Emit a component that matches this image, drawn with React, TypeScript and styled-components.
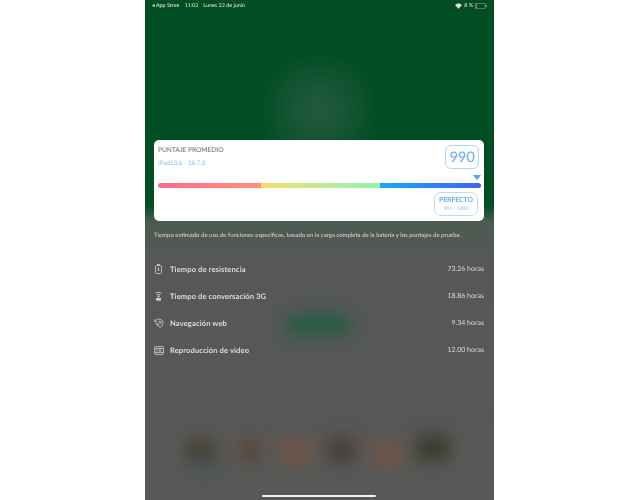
import React from "react";
import styled, { createGlobalStyle } from "styled-components";

const Global = createGlobalStyle`
  html, body { margin: 0; padding: 0; background: #fff; width: 640px; height: 500px; overflow: hidden; }
  body { font-family: "Lato", "Noto Sans", sans-serif; text-rendering: geometricPrecision; }
`;

const Page = styled.div`
  width: 640px;
  height: 500px;
  box-sizing: border-box;
  display: flex;
  padding-left: 145px;
`;

const Screen = styled.div`
  position: relative;
  width: 349px;
  height: 500px;
  overflow: hidden;
  background: #565859;
  display: flex;
  flex-direction: column;
`;

const Backdrop = styled.div`
  position: absolute;
  inset: 0;
  background:
    radial-gradient(ellipse 62px 60px at 174px 110px, #235a3e 0%, rgba(35, 90, 62, 0.7) 40%, rgba(35, 90, 62, 0) 100%),
    linear-gradient(180deg, #014d24 0px, #014d24 205px, #4a5c50 222px, #555758 248px, #565859 100%);
`;

const Blob = styled.div<{ $x: number; $y: number; $w: number; $h: number; $c: string }>`
  position: absolute;
  left: ${(p) => p.$x}px;
  top: ${(p) => p.$y}px;
  width: ${(p) => p.$w}px;
  height: ${(p) => p.$h}px;
  background: ${(p) => p.$c};
  border-radius: 8px;
  filter: blur(8px);
`;

const Foreground = styled.div`
  position: relative;
  display: flex;
  flex-direction: column;
  flex: 1;
  filter: blur(0.35px);
`;

const StatusBar = styled.div`
  height: 10px;
  margin-top: 1px;
  padding: 0 7px;
  display: flex;
  align-items: center;
  justify-content: space-between;
  color: #e4ebe6;
  font-size: 5.4px;
  line-height: 10px;
`;

const StatusLeft = styled.div`
  display: flex;
  align-items: center;
  gap: 5px;
`;

const StatusRight = styled.div`
  display: flex;
  align-items: center;
  gap: 2px;
`;

const Card = styled.section`
  margin: 129px 10px 0 9px;
  height: 81px;
  box-sizing: border-box;
  background: #fff;
  border-radius: 5px;
  padding: 5px 3px 5px 4px;
  display: flex;
  flex-direction: column;
`;

const CardTop = styled.div`
  display: flex;
  justify-content: space-between;
  padding-right: 2px;
`;

const CardTitles = styled.div`
  display: flex;
  flex-direction: column;
  padding-top: 1px;
`;

const CardTitle = styled.div`
  font-size: 6.6px;
  line-height: 8px;
  color: #666;
`;

const CardSub = styled.div`
  margin-top: 6px;
  font-size: 6.3px;
  line-height: 8px;
  color: #7fbff0;
`;

const ScoreBox = styled.div`
  width: 34px;
  height: 24px;
  box-sizing: border-box;
  border: 1px solid #acd7f7;
  border-radius: 6px;
  color: #5aaff0;
  font-size: 14.5px;
  display: flex;
  align-items: center;
  justify-content: center;
`;

const PointerRow = styled.div`
  display: flex;
  justify-content: flex-end;
  height: 5px;
  margin-top: 6px;
`;

const Pointer = styled.div`
  width: 0;
  height: 0;
  border-left: 4px solid transparent;
  border-right: 4px solid transparent;
  border-top: 5px solid #4da6ee;
`;

const Bar = styled.div`
  margin-top: 3px;
  height: 5px;
  border-radius: 3px;
  overflow: hidden;
  display: flex;
`;

const Segment = styled.div<{ $w: number; $from: string; $to: string }>`
  width: ${(p) => p.$w}px;
  background: linear-gradient(90deg, ${(p) => p.$from}, ${(p) => p.$to});
`;

const LevelRow = styled.div`
  margin-top: 4px;
  display: flex;
  justify-content: flex-end;
  padding-right: 3px;
`;

const LevelBox = styled.div`
  width: 44px;
  height: 24px;
  box-sizing: border-box;
  border: 1px solid #b5dbf7;
  border-radius: 7px;
  display: flex;
  flex-direction: column;
  align-items: center;
  justify-content: center;
  gap: 2px;
`;

const LevelName = styled.div`
  font-size: 6.8px;
  line-height: 8px;
  font-weight: 700;
  color: #58aeee;
`;

const LevelRange = styled.div`
  font-size: 5px;
  line-height: 6px;
  color: #7dbced;
`;

const Description = styled.p`
  margin: 11px 0 0 9px;
  font-size: 6px;
  line-height: 8px;
  color: #d6d8d8;
  white-space: nowrap;
`;

const Rows = styled.div`
  margin: 23px 10px 0 9px;
  display: flex;
  flex-direction: column;
  gap: 15px;
`;

const Row = styled.div`
  height: 12px;
  display: flex;
  align-items: center;
`;

const IconSlot = styled.div`
  width: 16px;
  display: flex;
  align-items: center;
  color: #d0d2d2;
`;

const RowLabel = styled.div`
  flex: 1;
  font-size: 7.55px;
  font-weight: 700;
  color: #dcdede;
  letter-spacing: 0.12px;
`;

const RowValue = styled.div`
  font-size: 7px;
  color: #d6d8d8;
`;

const HomeIndicator = styled.div`
  position: absolute;
  left: 117px;
  bottom: 3px;
  width: 114px;
  height: 2.5px;
  border-radius: 2px;
  background: #f2f2f2;
`;

const Svg = styled.svg`
  display: block;
`;

const Wifi = () => (
  <Svg width="7" height="6" viewBox="0 0 14 11" fill="#e4ebe6">
    <path d="M7 11 0 3.5C4-.8 10-.8 14 3.5z" />
  </Svg>
);

const Battery = () => (
  <Svg width="12" height="6" viewBox="0 0 24 12" fill="none">
    <rect x=".5" y=".5" width="20" height="11" rx="3" stroke="#c4cec8" />
    <rect x="2" y="2" width="2" height="8" fill="#e9504a" />
    <rect x="21.5" y="4" width="1.5" height="4" fill="#c4cec8" />
  </Svg>
);

const IconBattery = () => (
  <Svg width="9" height="10" viewBox="0 0 9 10" fill="none" stroke="currentColor" strokeWidth=".8">
    <rect x="1.5" y="1.5" width="6" height="8" rx="1" />
    <path d="M3 .5h3M4.5 3.2v3.6M3.5 5.6l1 1.2 1-1.2" />
  </Svg>
);

const IconTower = () => (
  <Svg width="9" height="10" viewBox="0 0 9 10" fill="none" stroke="currentColor" strokeWidth=".9">
    <path d="M1.5 2.4c2-1.6 4-1.6 6 0M2.8 4c1.2-.9 2.2-.9 3.4 0" />
    <rect x="3.4" y="4.6" width="2.2" height="1.6" fill="currentColor" stroke="none" />
    <rect x="2" y="7" width="5" height="2.6" fill="currentColor" stroke="none" />
  </Svg>
);

const IconWeb = () => (
  <Svg width="10" height="10" viewBox="0 0 10 10" fill="none" stroke="currentColor" strokeWidth=".8">
    <path d="M1 3.4A4.2 4.2 0 1 1 5 9.4" />
    <path d="M.8 1.4v2.2H3" />
    <path d="M2 5.4l2.2.6.6 2-1.8-.4zM5 3l2 .8-.6 1.8-1.6-1z" strokeWidth=".7" />
  </Svg>
);

const IconVideo = () => (
  <Svg width="10" height="9" viewBox="0 0 10 9" fill="none" stroke="currentColor" strokeWidth=".8">
    <rect x=".6" y=".6" width="8.8" height="7.8" rx=".8" />
    <path d="M.6 2.4h8.8M.6 6.6h8.8" />
    <path d="M2.2 3.4v2.2M3.8 3.4v2.2M5.4 3.4v2.2h1.4v-2.2z" strokeWidth=".6" />
  </Svg>
);

const rows = [
  { icon: <IconBattery />, label: "Tiempo de resistencia", value: "73.26 horas" },
  { icon: <IconTower />, label: "Tiempo de conversación 3G", value: "18.86 horas" },
  { icon: <IconWeb />, label: "Navegación web", value: "9.34 horas" },
  { icon: <IconVideo />, label: "Reproducción de video", value: "12.00 horas" },
];

const blobs = [
  { x: -20, y: 428, w: 390, h: 48, c: "rgba(100, 94, 84, 0.28)" },
  { x: 140, y: 316, w: 66, h: 18, c: "rgba(18, 95, 55, 0.75)" },
  { x: 40, y: 438, w: 30, h: 24, c: "rgba(62, 58, 40, 0.7)" },
  { x: 44, y: 458, w: 32, h: 12, c: "rgba(60, 80, 90, 0.5)" },
  { x: 95, y: 438, w: 20, h: 26, c: "rgba(90, 62, 45, 0.7)" },
  { x: 132, y: 438, w: 38, h: 26, c: "rgba(125, 82, 58, 0.5)" },
  { x: 182, y: 436, w: 28, h: 28, c: "rgba(66, 56, 50, 0.75)" },
  { x: 226, y: 440, w: 34, h: 26, c: "rgba(125, 82, 58, 0.5)" },
  { x: 270, y: 434, w: 36, h: 28, c: "rgba(58, 56, 44, 0.85)" },
];

export default function App() {
  return (
    <>
      <Global />
      <Page>
        <Screen>
          <Backdrop />
          {blobs.map((b) => (
            <Blob key={b.x} $x={b.x} $y={b.y} $w={b.w} $h={b.h} $c={b.c} />
          ))}
          <Foreground>
            <StatusBar>
              <StatusLeft>
                <span>◂ App Store</span>
                <span>11:02</span>
                <span>Lunes 22 de junio</span>
              </StatusLeft>
              <StatusRight>
                <Wifi />
                <span>8 %</span>
                <Battery />
              </StatusRight>
            </StatusBar>
            <Card>
              <CardTop>
                <CardTitles>
                  <CardTitle>PUNTAJE PROMEDIO</CardTitle>
                  <CardSub>iPad13.6 - 18.7.8</CardSub>
                </CardTitles>
                <ScoreBox>990</ScoreBox>
              </CardTop>
              <PointerRow>
                <Pointer />
              </PointerRow>
              <Bar>
                <Segment $w={103} $from="#ff6a8b" $to="#ff8f7c" />
                <Segment $w={119} $from="#f7dc6c" $to="#8ff2b4" />
                <Segment $w={101} $from="#18a8fb" $to="#3e63ee" />
              </Bar>
              <LevelRow>
                <LevelBox>
                  <LevelName>PERFECTO</LevelName>
                  <LevelRange>901 - 1000</LevelRange>
                </LevelBox>
              </LevelRow>
            </Card>
            <Description>
              Tiempo estimado de uso de funciones específicas, basado en la carga completa de la batería y los puntajes de prueba.
            </Description>
            <Rows>
              {rows.map((r) => (
                <Row key={r.label}>
                  <IconSlot>{r.icon}</IconSlot>
                  <RowLabel>{r.label}</RowLabel>
                  <RowValue>{r.value}</RowValue>
                </Row>
              ))}
            </Rows>
          </Foreground>
          <HomeIndicator />
        </Screen>
      </Page>
    </>
  );
}
